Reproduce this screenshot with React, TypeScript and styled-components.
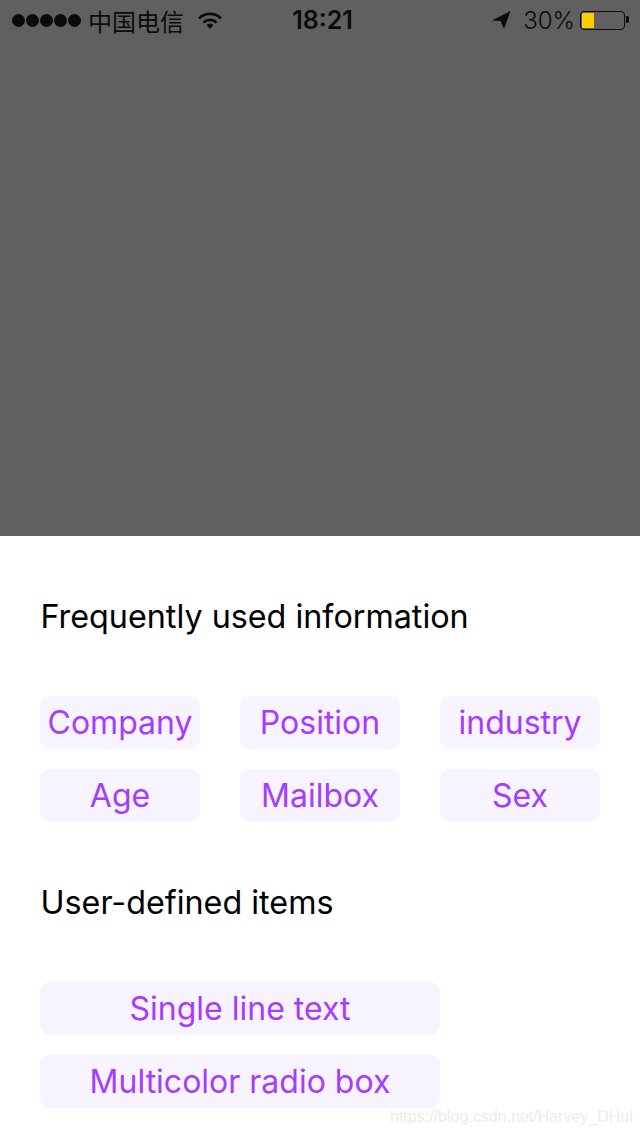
import styled, { createGlobalStyle } from 'styled-components'

const GlobalStyle = createGlobalStyle`
  html, body {
    margin: 0;
    padding: 0;
    background: #fff;
  }
  body {
    font-family: Inter, "Noto Sans CJK SC", sans-serif;
  }
`

const Page = styled.div`
  position: relative;
  width: 640px;
  height: 1136px;
  overflow: hidden;
  display: flex;
  flex-direction: column;
`
const Backdrop = styled.div`
  flex: 0 0 536px;
  background: #606060;
`
const StatusBar = styled.div`
  height: 40px;
  padding: 0 12px;
  display: grid;
  grid-template-columns: 1fr auto 1fr;
  align-items: center;
  color: #0b0b0b;
  font-size: 24px;
`
const StatusLeft = styled.div`
  display: flex;
  align-items: center;
`
const StatusRight = styled.div`
  display: flex;
  align-items: center;
  justify-content: flex-end;
`
const Signal = styled.div`
  display: flex;
  gap: 1px;
  margin-right: 7px;
`
const Dot = styled.span`
  width: 13px;
  height: 13px;
  border-radius: 50%;
  background: #0b0b0b;
`
const Carrier = styled.span`
  font-family: "Noto Sans CJK SC", sans-serif;
  font-size: 24px;
  font-weight: 400;
  margin-right: 13px;
`
const Clock = styled.span`
  font-weight: 600;
  font-size: 25px;
  margin-left: 5px;
`
const Percent = styled.span`
  font-weight: 300;
  font-size: 24px;
  margin: 0 5px 0 12px;
`
const Battery = styled.div`
  position: relative;
  box-sizing: border-box;
  width: 45px;
  height: 19px;
  padding: 1px;
  border: 1.5px solid #0b0b0b;
  border-radius: 4px;
  margin-right: 3px;
`
const BatteryLevel = styled.div`
  width: 12px;
  height: 100%;
  background: #ffcc00;
  border-radius: 1px;
`
const BatteryCap = styled.span`
  position: absolute;
  right: -5px;
  top: 4px;
  width: 3px;
  height: 7px;
  background: #0b0b0b;
  border-radius: 0 2px 2px 0;
`
const Sheet = styled.div`
  flex: 1;
  background: #fff;
  padding: 60px 40px 0;
`
const SectionTitle = styled.h2`
  margin: 0 0 60px;
  height: 40px;
  line-height: 42px;
  font-size: 32.3px;
  font-weight: 400;
  color: #000;
  padding-left: 0.5px;
`
const TagGrid = styled.div`
  display: grid;
  grid-template-columns: repeat(3, 160px);
  column-gap: 40px;
  row-gap: 20px;
  margin-bottom: 60px;
`
const WideList = styled(TagGrid)`
  grid-template-columns: 400px;
`
const Tag = styled.div`
  height: 53px;
  line-height: 53px;
  border-radius: 10px;
  background: #f7f3ff;
  color: #a53cff;
  font-size: 32px;
  text-align: center;
  white-space: nowrap;
`
const Watermark = styled.span`
  position: absolute;
  left: 390px;
  top: 1108px;
  font-family: "Liberation Sans", sans-serif;
  font-size: 16px;
  color: #ececec;
  white-space: nowrap;
`

const frequent = ['Company', 'Position', 'industry', 'Age', 'Mailbox', 'Sex']
const custom = ['Single line text', 'Multicolor radio box']

export default function App() {
  return (
    <>
      <GlobalStyle />
      <Page>
        <Backdrop>
          <StatusBar>
            <StatusLeft>
              <Signal>
                {[0, 1, 2, 3, 4].map(i => <Dot key={i} />)}
              </Signal>
              <Carrier>中国电信</Carrier>
              <svg width="26" height="20" viewBox="0 0 26 20">
                <path d="M1 7.5a17 17 0 0 1 24 0l-2 2a14 14 0 0 0-20 0z" fill="#0b0b0b" />
                <path d="M5.5 11.5a11 11 0 0 1 15 0l-2 2a8 8 0 0 0-11 0z" fill="#0b0b0b" />
                <path d="M9.5 15a5.2 5.2 0 0 1 7 0L13 19z" fill="#0b0b0b" />
              </svg>
            </StatusLeft>
            <Clock>18:21</Clock>
            <StatusRight>
              <svg width="20" height="20" viewBox="0 0 20 20">
                <path d="M19.5 1 1 10.5l8.5.5 3.5 8z" fill="#0b0b0b" />
              </svg>
              <Percent>30%</Percent>
              <Battery>
                <BatteryLevel />
                <BatteryCap />
              </Battery>
            </StatusRight>
          </StatusBar>
        </Backdrop>
        <Sheet>
          <SectionTitle>Frequently used information</SectionTitle>
          <TagGrid>
            {frequent.map(name => <Tag key={name}>{name}</Tag>)}
          </TagGrid>
          <SectionTitle>User-defined items</SectionTitle>
          <WideList>
            {custom.map(name => <Tag key={name}>{name}</Tag>)}
          </WideList>
        </Sheet>
        <Watermark>https://blog.csdn.net/Harvey_DHui</Watermark>
      </Page>
    </>
  )
}
